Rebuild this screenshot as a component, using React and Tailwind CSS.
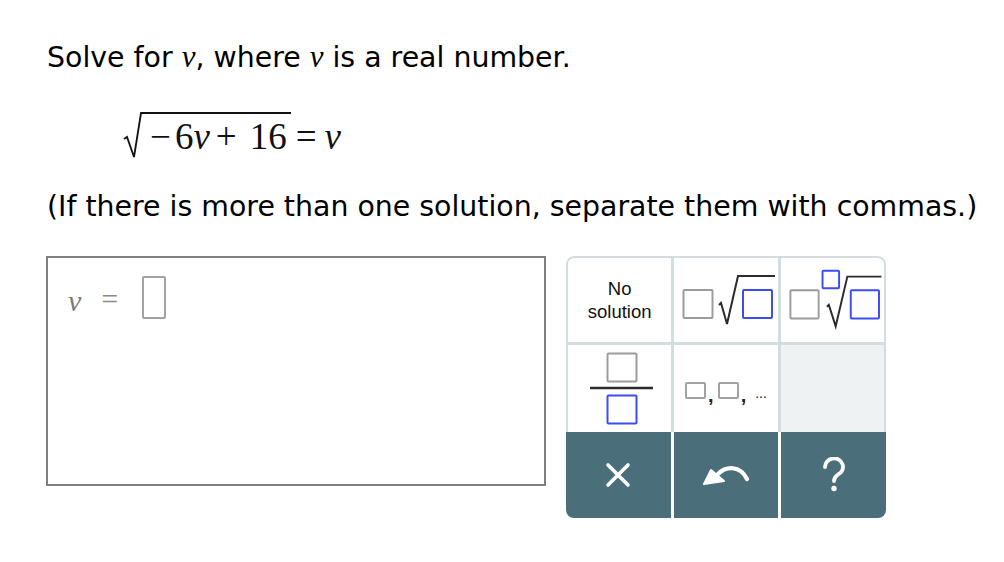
import React from "react";

const sans = "font-['DejaVu_Sans',Verdana,sans-serif]";
const serif = "font-['Liberation_Serif','Times_New_Roman',serif]";

function SqrtIcon() {
  return (
    <svg width="96" height="56" viewBox="0 0 96 56">
      <rect x="3.5" y="18" width="29" height="28" rx="1" fill="none" stroke="#9c9c9c" strokeWidth="2" />
      <polyline points="39,33 41,31 47,52 58,4 95,4" fill="none" stroke="#2b2b2b" strokeWidth="2" strokeLinejoin="miter" />
      <rect x="63" y="18" width="29" height="28" rx="1" fill="none" stroke="#3b4cf5" strokeWidth="2" />
    </svg>
  );
}

function NthRootIcon() {
  return (
    <svg width="100" height="64" viewBox="0 0 100 64">
      <rect x="3.5" y="23" width="29" height="29" rx="1" fill="none" stroke="#9c9c9c" strokeWidth="2" />
      <rect x="36.5" y="3" width="17" height="18" rx="1" fill="none" stroke="#3b4cf5" strokeWidth="2" />
      <polyline points="41,40 43,38 50,60 62,9 97,9" fill="none" stroke="#2b2b2b" strokeWidth="2" />
      <rect x="65.5" y="23" width="29" height="29" rx="1" fill="none" stroke="#3b4cf5" strokeWidth="2" />
    </svg>
  );
}

function FracIcon() {
  return (
    <svg width="66" height="76" viewBox="0 0 66 76">
      <rect x="18.5" y="2.5" width="29" height="28" rx="1" fill="none" stroke="#9c9c9c" strokeWidth="2" />
      <line x1="1" y1="37" x2="64" y2="37" stroke="#2b2b2b" strokeWidth="2.5" />
      <rect x="18.5" y="44.5" width="29" height="28" rx="1" fill="none" stroke="#3b4cf5" strokeWidth="2" />
    </svg>
  );
}

export default function App() {
  return (
    <div className={`w-[1004px] h-[562px] bg-white text-black ${sans}`}>
      <div className="pl-[47px] pt-[39px]">
        <p className="text-[28.4px] leading-[36px] whitespace-nowrap">
          Solve for <span className={`${serif} italic text-[31px]`}>v</span>, where{" "}
          <span className={`${serif} italic text-[31px]`}>v</span> is a real number.
        </p>

        <div className={`mt-[36px] ml-[75px] flex items-start ${serif} text-[37px] leading-[36px] text-[#111]`}>
          <svg width="20" height="47" viewBox="0 0 20 47">
            <polyline points="2,27 5,25 12,45 19,1 20,1" fill="none" stroke="#111" strokeWidth="1.8" />
          </svg>
          <span className="flex border-t-[2px] border-[#111] pt-[5px] pl-[8px] pr-[4px]">
            <span>−</span>
            <span className="ml-[4px]">6</span>
            <span className="italic">v</span>
            <span className="ml-[6px]">+</span>
            <span className="ml-[13px]">16</span>
          </span>
          <span className="flex pt-[7px] ml-[5px]">
            <span>=</span>
            <span className="ml-[8px] italic">v</span>
          </span>
        </div>

        <p className="mt-[30px] text-[28.4px] leading-[36px] whitespace-nowrap">
          (If there is more than one solution, separate them with commas.)
        </p>

        <div className="mt-[31px] flex gap-[20px] -ml-[1px]">
          <div className="w-[500px] h-[230px] border-2 border-[#808080] bg-white">
            <div className="flex items-center pl-[20px] pt-[18px]">
              <span className={`${serif} italic text-[30px] leading-[30px] text-[#7a7a7a] mt-[6px]`}>v</span>
              <span className={`${serif} ml-[20px] text-[30px] leading-[30px] text-[#8a8a8a] mt-[2px]`}>=</span>
              <div className="ml-[24px] w-[24px] h-[43px] border-2 border-[#a2a2a2] rounded-[2px]" />
            </div>
          </div>

          <div className="w-[320px] h-[262px] rounded-[8px] overflow-hidden flex flex-col">
            <div className="grid grid-cols-3 gap-[3px] bg-[#d3dcdf] px-[2px] pt-[2px] rounded-t-[8px]">
              <div className="h-[84px] bg-white rounded-tl-[6px] flex items-center justify-center text-center font-['Liberation_Sans',Arial,sans-serif] text-[18.5px] leading-[23px] text-[#111]">
                No
                <br />
                solution
              </div>
              <div className="h-[84px] bg-white flex items-center justify-center pl-[4px]">
                <SqrtIcon />
              </div>
              <div className="h-[84px] bg-white rounded-tr-[6px] flex items-center justify-center pl-[6px] pb-[2px]">
                <NthRootIcon />
              </div>
              <div className="h-[87px] bg-white flex items-center justify-center pl-[4px]">
                <FracIcon />
              </div>
              <div className="h-[87px] bg-white flex items-center justify-center pt-[4px] font-['Liberation_Sans',Arial,sans-serif]">
                <div className="w-[21px] h-[17px] border-2 border-[#a2a2a2] rounded-[2px]" />
                <span className="ml-[2px] text-[20px] leading-[20px] font-bold text-[#222] mt-[8px]">,</span>
                <div className="ml-[4px] w-[21px] h-[17px] border-2 border-[#a2a2a2] rounded-[2px]" />
                <span className="ml-[2px] text-[20px] leading-[20px] font-bold text-[#222] mt-[8px]">,</span>
                <span className="ml-[9px] text-[14px] leading-[14px] text-[#222] mt-[4px]">...</span>
              </div>
              <div className="h-[87px] bg-[#eef2f3]" />
            </div>
            <div className="grid grid-cols-3 gap-[3px] bg-white flex-1">
              <div className="bg-[#4a6f7b] flex items-center justify-center">
                <svg width="26" height="26" viewBox="0 0 26 26">
                  <path d="M3 3 L23 23 M23 3 L3 23" stroke="white" strokeWidth="3.6" strokeLinecap="round" />
                </svg>
              </div>
              <div className="bg-[#4a6f7b] flex items-center justify-center">
                <svg width="48" height="24" viewBox="0 0 48 24">
                  <path d="M16 11 C 24 3, 38 2, 45 16" fill="none" stroke="white" strokeWidth="4.2" strokeLinecap="round" />
                  <polygon points="2,21 9,7 22,18" fill="white" stroke="white" strokeWidth="2" strokeLinejoin="round" />
                </svg>
              </div>
              <div className="bg-[#4a6f7b] flex items-center justify-center">
                <svg width="26" height="36" viewBox="0 0 26 36">
                  <path d="M4 10 A 9 8.5 0 1 1 17 17.5 C 14 19.5 13 21 13 24" fill="none" stroke="white" strokeWidth="3.8" strokeLinecap="round" />
                  <circle cx="13" cy="31.5" r="2.7" fill="white" />
                </svg>
              </div>
            </div>
          </div>
        </div>
      </div>
    </div>
  );
}
